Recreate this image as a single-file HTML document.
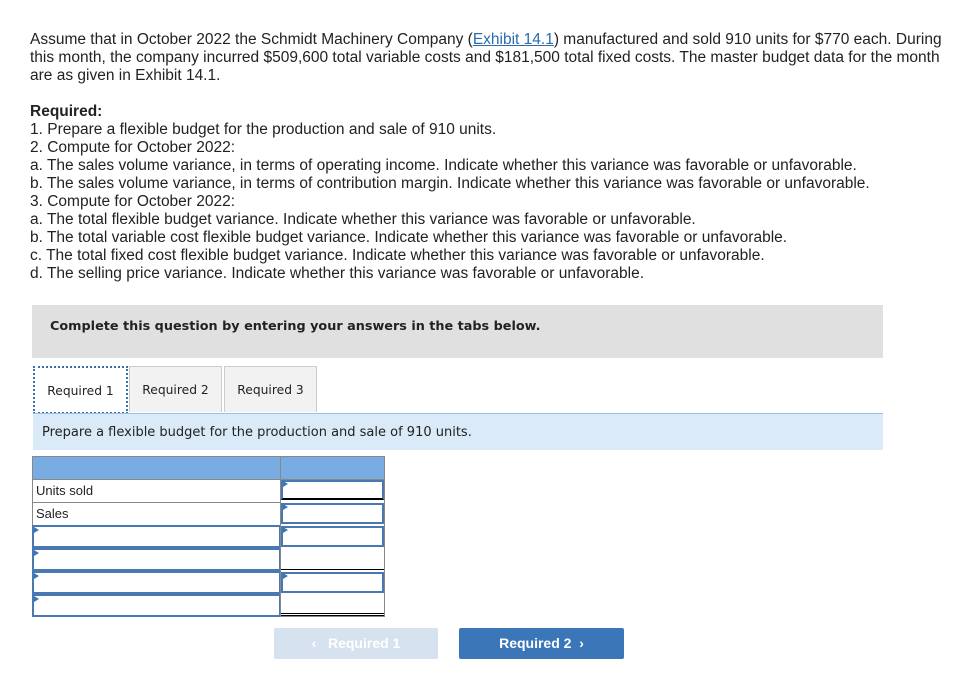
<!DOCTYPE html>
<html><head><style>
body{margin:0;width:977px;height:684px;background:#fff;position:relative;font-family:"Liberation Sans",Arial,sans-serif;color:#222;overflow:hidden}
.t{position:absolute;left:30px;font-size:15.5px;line-height:18px;white-space:nowrap}
a{color:#2a6cb0;text-decoration:underline}
.box{position:absolute;left:32px;top:305px;width:851px;height:53px;background:#e0e0e0}
.box div{position:absolute;left:18px;top:14px;font-family:"DejaVu Sans",sans-serif;font-weight:bold;font-size:12.8px}
.tab{position:absolute;top:366px;height:46px;background:#f2f2f2;border:1px solid #ccc;border-bottom:none;font-family:"DejaVu Sans",sans-serif;font-size:12.3px;text-align:center;line-height:46px;box-sizing:border-box}
.band{position:absolute;left:33px;top:413px;width:850px;height:37px;background:#daeaf8;border-top:1px solid #9cc1e6;box-sizing:border-box;font-family:"DejaVu Sans",sans-serif;font-size:13px;line-height:38px;padding-left:9px}
.c{position:absolute;box-sizing:border-box;font-size:13px;padding-left:3px;line-height:22px}
.m{position:absolute;width:0;height:0;border-top:3px solid transparent;border-bottom:3px solid transparent;border-left:5px solid #3a76b8}
.btn{position:absolute;top:628px;height:31px;border-radius:2px;font-weight:bold;font-size:14px;color:#fff;text-align:center;line-height:31px}
</style></head><body>
<div class="t" style="top:31px">Assume that in October 2022 the Schmidt Machinery Company (<a>Exhibit 14.1</a>) manufactured and sold 910 units for $770 each. During</div>
<div class="t" style="top:49px">this month, the company incurred $509,600 total variable costs and $181,500 total fixed costs. The master budget data for the month</div>
<div class="t" style="top:67px">are as given in Exhibit 14.1.</div>
<div class="t" style="top:103px;font-weight:bold">Required:</div>
<div class="t" style="top:121px">1. Prepare a flexible budget for the production and sale of 910 units.</div>
<div class="t" style="top:139px">2. Compute for October 2022:</div>
<div class="t" style="top:157px">a. The sales volume variance, in terms of operating income. Indicate whether this variance was favorable or unfavorable.</div>
<div class="t" style="top:175px">b. The sales volume variance, in terms of contribution margin. Indicate whether this variance was favorable or unfavorable.</div>
<div class="t" style="top:193px">3. Compute for October 2022:</div>
<div class="t" style="top:211px">a. The total flexible budget variance. Indicate whether this variance was favorable or unfavorable.</div>
<div class="t" style="top:229px">b. The total variable cost flexible budget variance. Indicate whether this variance was favorable or unfavorable.</div>
<div class="t" style="top:247px">c. The total fixed cost flexible budget variance. Indicate whether this variance was favorable or unfavorable.</div>
<div class="t" style="top:265px">d. The selling price variance. Indicate whether this variance was favorable or unfavorable.</div>
<div class="box"><div>Complete this question by entering your answers in the tabs below.</div></div>
<div class="tab" style="left:33px;width:95px;background:#fff;border:2px dotted #3a6fb0;height:48px">Required 1</div>
<div class="tab" style="left:129px;width:93px">Required 2</div>
<div class="tab" style="left:224px;width:93px">Required 3</div>
<div class="band">Prepare a flexible budget for the production and sale of 910 units.</div>
<div class="c" style="left:32px;top:456px;width:249px;height:24px;background:#7aace4;border:1px solid #888"></div>
<div class="c" style="left:280px;top:456px;width:105px;height:24px;background:#7aace4;border:1px solid #888"></div>
<div class="c" style="left:32px;top:479px;width:249px;height:24px;border:1px solid #888">Units sold</div>
<div class="c" style="left:32px;top:502px;width:249px;height:24px;border:1px solid #888">Sales</div>
<div class="c" style="left:32px;top:525px;width:249px;height:23px;border:2px solid #4a78b0"></div>
<div class="c" style="left:32px;top:548px;width:249px;height:23px;border:2px solid #4a78b0"></div>
<div class="c" style="left:32px;top:571px;width:249px;height:23px;border:2px solid #4a78b0"></div>
<div class="c" style="left:32px;top:594px;width:249px;height:23px;border:2px solid #4a78b0"></div>
<div class="c" style="left:280px;top:479px;width:105px;height:138px;border:1px solid #888"></div>
<div class="c" style="left:281px;top:480px;width:103px;height:20px;border:2px solid #4a78b0;border-bottom-color:#000"></div>
<div class="c" style="left:281px;top:503px;width:103px;height:21px;border:2px solid #4a78b0"></div>
<div class="c" style="left:281px;top:526px;width:103px;height:21px;border:2px solid #4a78b0"></div>
<div class="c" style="left:281px;top:549px;width:103px;height:21px;border-bottom:1px solid #000"></div>
<div class="c" style="left:281px;top:572px;width:103px;height:21px;border:2px solid #4a78b0"></div>
<div class="c" style="left:281px;top:594px;width:103px;height:22px;border-bottom:3px double #000"></div>
<div class="m" style="left:34px;top:527px"></div><div class="m" style="left:34px;top:550px"></div><div class="m" style="left:34px;top:573px"></div><div class="m" style="left:34px;top:596px"></div>
<div class="m" style="left:283px;top:481px"></div><div class="m" style="left:283px;top:504px"></div><div class="m" style="left:283px;top:527px"></div><div class="m" style="left:283px;top:573px"></div>
<div class="btn" style="left:274px;width:164px;background:#d6e2f0">&lsaquo;&nbsp;&nbsp; Required 1</div>
<div class="btn" style="left:459px;width:165px;background:#3a76b8">Required 2 &nbsp;&rsaquo;</div>
</body></html>
